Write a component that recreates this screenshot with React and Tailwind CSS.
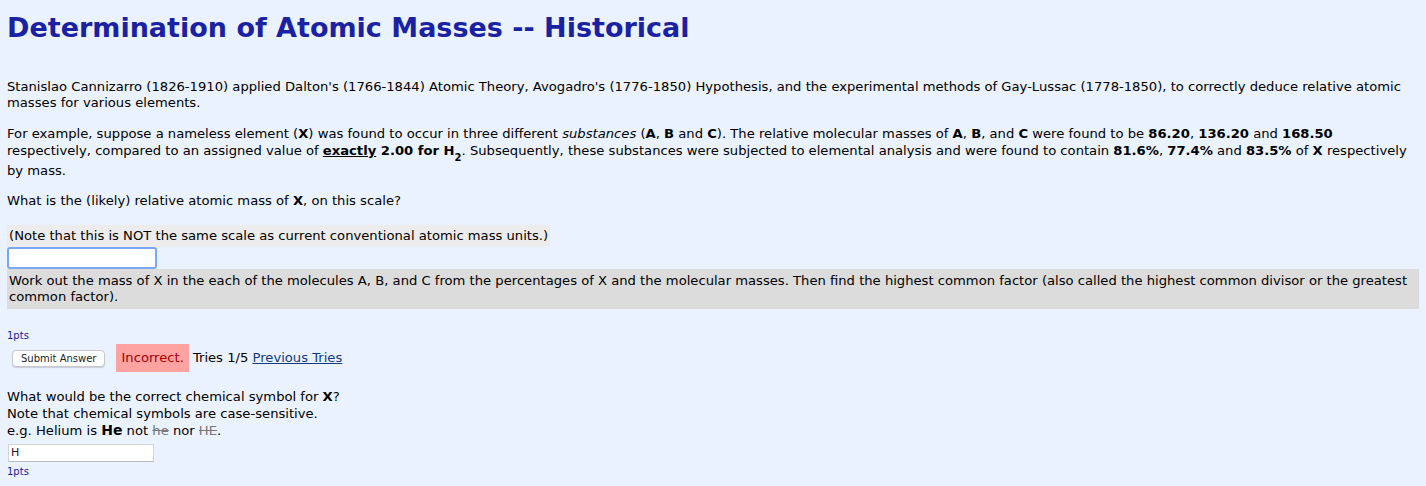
import React from 'react';

export default function App() {
  return (
    <div
      className="min-h-[486px] bg-[#eaf2ff] px-[7px] pt-[11px] text-[13.15px] leading-[16px] text-black"
      style={{ fontFamily: '"DejaVu Sans", Verdana, sans-serif' }}
    >
      <h1 className="text-[27px] font-bold leading-[34px] text-[#1a22a3]">
        Determination of Atomic Masses -- Historical
      </h1>

      <p className="mt-[34px]">
        Stanislao Cannizarro (1826-1910) applied Dalton's (1766-1844) Atomic Theory, Avogadro's (1776-1850) Hypothesis, and the experimental methods of Gay-Lussac (1778-1850), to correctly deduce relative atomic masses for various elements.
      </p>

      <p className="mt-[14px] leading-[17px]">
        For example, suppose a nameless element (<b>X</b>) was found to occur in three different <i>substances</i> (<b>A</b>, <b>B</b> and <b>C</b>). The relative molecular masses of <b>A</b>, <b>B</b>, and <b>C</b> were found to be <b>86.20</b>, <b>136.20</b> and <b>168.50</b> respectively, compared to an assigned value of <b><u>exactly</u> 2.00 for H<sub className="inline-block pb-[2px] align-[-3px] text-[10px] leading-[10px]">2</sub></b>. Subsequently, these substances were subjected to elemental analysis and were found to contain <b>81.6%</b>, <b>77.4%</b> and <b>83.5%</b> of <b>X</b> respectively by mass.
      </p>

      <p className="mt-[14px]">
        What is the (likely) relative atomic mass of <b>X</b>, on this scale?
      </p>

      <div className="mt-[16px] inline-block bg-[#ececec] px-[2px] py-[3px]">
        (Note that this is NOT the same scale as current conventional atomic mass units.)
      </div>

      <div>
        <input
          type="text"
          className="block h-[22px] w-[150px] rounded-[3px] border-2 border-[#7aa7f5] bg-white outline-none"
        />
      </div>

      <div className="bg-[#dcdcdc] px-[2px] pt-[4px] pb-[4px]">
        Work out the mass of X in the each of the molecules A, B, and C from the percentages of X and the molecular masses. Then find the highest common factor (also called the highest common divisor or the greatest common factor).
      </div>

      <div className="mt-[20px] text-[10px] leading-[14px] text-[#1a1aa0]">1pts</div>

      <div className="mt-[1px] flex items-center">
        <button className="ml-[5px] h-[17px] rounded-[4px] border border-[#c8c8c8] bg-white px-[8px] text-[10px] leading-[15px] text-[#222] shadow-[0_1px_1px_rgba(0,0,0,0.15)]">
          Submit Answer
        </button>
        <span className="ml-[11px] bg-[#ffa2a2] px-[5px] py-[6px] text-[#a40000]">Incorrect.</span>
        <span className="ml-[4px]">
          Tries 1/5{' '}
          <a href="#" className="text-[#113a82] underline">Previous Tries</a>
        </span>
      </div>

      <div className="mt-[17px] leading-[16.5px]">
        What would be the correct chemical symbol for <b>X</b>?
        <br />
        Note that chemical symbols are case-sensitive.
        <br />
        e.g. Helium is <b className="text-[14px]">He</b> not <s className="text-[#777]">he</s> nor <s className="text-[#777]">HE</s>.
      </div>

      <input
        type="text"
        defaultValue="H"
        className="ml-[1px] mt-[4px] block h-[18px] w-[146px] border border-[#d4d4d4] border-b-[#b8b8b8] bg-white px-[2px] text-[11px] text-[#222] outline-none"
      />

      <div className="mt-[3px] text-[10px] leading-[14px] text-[#1a1aa0]">1pts</div>
    </div>
  );
}
